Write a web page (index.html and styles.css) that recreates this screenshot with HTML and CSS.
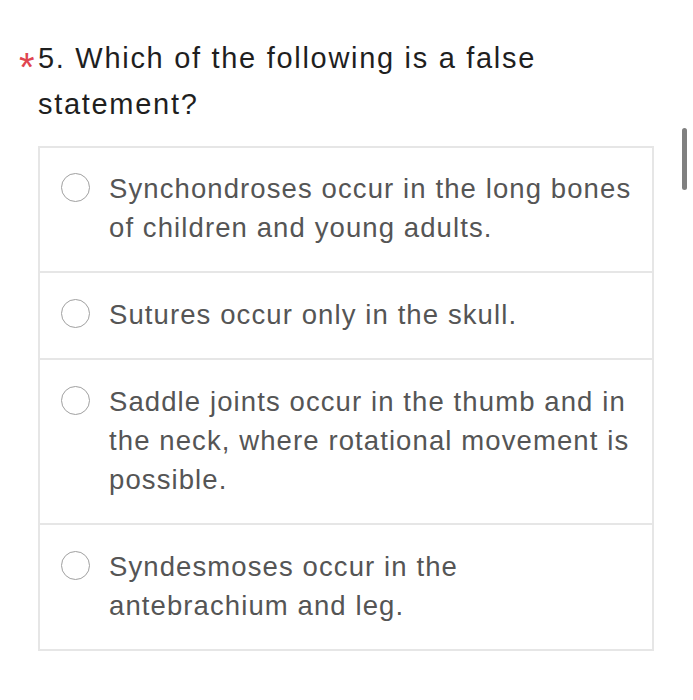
FILE: index.html
```html
<!DOCTYPE html>
<html>
<head>
<meta charset="utf-8">
<link rel="stylesheet" href="styles.css">
</head>
<body>
<div class="page">
  <h1 class="question"><span class="req">*</span>5. Which of the following is a false statement?</h1>
  <div class="options">
    <label class="option"><span class="radio"></span><span class="text">Synchondroses occur in the long bones of children and young adults.</span></label>
    <label class="option"><span class="radio"></span><span class="text">Sutures occur only in the skull.</span></label>
    <label class="option"><span class="radio"></span><span class="text">Saddle joints occur in the thumb and in the neck, where rotational movement is possible.</span></label>
    <label class="option"><span class="radio"></span><span class="text">Syndesmoses occur in the antebrachium and leg.</span></label>
  </div>
</div>
<div class="scrollbar"></div>
</body>
</html>
```
FILE: styles.css
```css
html, body {
  margin: 0;
  padding: 0;
  background: #ffffff;
}
body {
  font-family: "Liberation Sans", Arial, sans-serif;
  width: 693px;
  height: 700px;
  overflow: hidden;
  position: relative;
}
.page {
  padding: 35px 39px 0 38px;
}
.question {
  margin: 0 0 19px 0;
  font-size: 29px;
  font-weight: normal;
  line-height: 46px;
  letter-spacing: 1.7px;
  color: #1f1f1f;
  position: relative;
  width: 560px;
}
.req {
  color: #e0454f;
  position: absolute;
  left: -19px;
  top: 9px;
  font-size: 40px;
  line-height: 46px;
  letter-spacing: 0;
}
.options {
  border: 2px solid #e6e6e6;
  width: 612px;
}
.option {
  display: flex;
  align-items: flex-start;
  padding: 22px 20px 24px 21px;
  border-top: 2px solid #e6e6e6;
}
.option:first-child {
  border-top: none;
  padding-top: 21px;
}
.radio {
  flex: none;
  width: 27px;
  height: 27px;
  border: 1.5px solid #a0a0a0;
  border-radius: 50%;
  margin-top: 4px;
  margin-right: 19px;
}
.text {
  font-size: 27.5px;
  line-height: 39px;
  letter-spacing: 1.1px;
  color: #555555;
  max-width: 526px;
}
.scrollbar {
  position: absolute;
  left: 682px;
  top: 128px;
  width: 5px;
  height: 62px;
  border-radius: 3px;
  background: #808080;
}
```
